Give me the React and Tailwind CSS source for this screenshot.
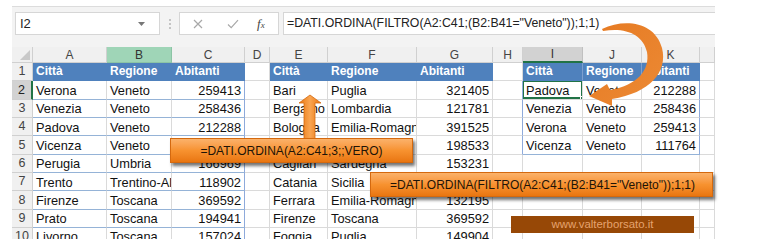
import React from "react";

const COLS = "grid-cols-[21px_74px_65px_73px_25px_58px_89px_76px_30px_60px_59px_58px_15px]";
const LETTERS = ["", "A", "B", "C", "D", "E", "F", "G", "H", "I", "J", "K", ""];

const DATA = [
  ["Città", "Regione", "Abitanti", "Città", "Regione", "Abitanti", "Città", "Regione", "Abitanti"],
  ["Verona", "Veneto", "259413", "Bari", "Puglia", "321405", "Padova", "Veneto", "212288"],
  ["Venezia", "Veneto", "258436", "Bergamo", "Lombardia", "121781", "Venezia", "Veneto", "258436"],
  ["Padova", "Veneto", "212288", "Bologna", "Emilia-Romagna", "391525", "Verona", "Veneto", "259413"],
  ["Vicenza", "Veneto", "111764", "Brescia", "Lombardia", "198533", "Vicenza", "Veneto", "111764"],
  ["Perugia", "Umbria", "166969", "Cagliari", "Sardegna", "153231", "", "", ""],
  ["Trento", "Trentino-Alto Adige", "118902", "Catania", "Sicilia", "314555", "", "", ""],
  ["Firenze", "Toscana", "369592", "Ferrara", "Emilia-Romagna", "132195", "", "", ""],
  ["Prato", "Toscana", "194941", "Firenze", "Toscana", "369592", "", "", ""],
  ["Livorno", "Toscana", "157024", "Foggia", "Puglia", "149904", "", "", ""],
];

function HeaderRow() {
  return (
    <div className={`grid ${COLS} h-[16px]`}>
      {LETTERS.map((l, i) => {
        let cls = "bg-[#f0f0f0] border-r border-b border-[#d0d0d0] text-[#444]";
        if (l === "B") cls = "bg-[#9fd5b7] border-r border-b border-[#8cc4a5] text-[#333]";
        if (l === "I") cls = "bg-[#d2d2d2] border-r border-[#c0c0c0] border-b-2 border-b-[#217346] text-[#333]";
        return (
          <div key={i} className={`relative flex items-center justify-center text-[12px] leading-none ${cls}`}>
            {i === 0 && (
              <svg className="absolute right-[2px] bottom-[2px]" width="10" height="10" viewBox="0 0 10 10">
                <polygon points="10,0 10,10 0,10" fill="#c8c8c8" />
              </svg>
            )}
            {l}
          </div>
        );
      })}
    </div>
  );
}

function DataRow({ r, idx }) {
  const n = idx + 1;
  const header = idx === 0;
  const cells = [];
  cells.push(
    <div
      key="rh"
      className={`flex items-center justify-center text-[12.5px] leading-none border-b border-[#d0d0d0] ${
        n === 2
          ? "bg-[#d2d2d2] text-[#222] border-r-2 border-r-[#217346]"
          : "bg-[#f0f0f0] text-[#444] border-r border-r-[#d0d0d0]"
      }`}
    >
      {n}
    </div>
  );
  const blue = "bg-[#4f81bd] text-white font-bold text-[12px]";
  const mk = (key, text, opts = {}) => {
    const { num, table, tableBlueBottom, rightBlue, sel, hdrSep } = opts;
    let cls = "relative flex items-end pb-[1px] overflow-hidden whitespace-nowrap leading-none border-r border-b ";
    if (header && table) {
      cls += `${blue} border-b-[#4f81bd] ${hdrSep ? "border-r-[#7d9fcf]" : "border-r-[#4f81bd]"} pb-[3px] `;
    } else {
      cls += "bg-white text-[#111] text-[12.8px] ";
      cls += tableBlueBottom ? "border-b-[#95b3d7] " : "border-b-[#dadada] ";
      cls += rightBlue ? "border-r-[#8eaadb] " : "border-r-[#dadada] ";
    }
    cls += num && !header ? "justify-end pr-[3px]" : "pl-[3px]";
    return (
      <div key={key} className={cls}>
        {text}
        {sel && (
          <div className="absolute -left-[1px] -top-[1px] w-[61px] h-[19px] border-2 border-[#217346]">
            <div className="absolute -right-[4px] -bottom-[4px] w-[5px] h-[5px] bg-[#217346] border border-white" />
          </div>
        )}
      </div>
    );
  };
  cells.push(mk("A", r[0], { table: true, tableBlueBottom: true }));
  cells.push(mk("B", r[1], { table: true, tableBlueBottom: true }));
  cells.push(mk("C", r[2], { num: true, table: true, tableBlueBottom: true, rightBlue: true }));
  cells.push(mk("D", ""));
  cells.push(mk("E", r[3], { table: true }));
  cells.push(mk("F", r[4], { table: true }));
  cells.push(mk("G", r[5], { num: true, table: true }));
  const inIK = idx <= 4;
  cells.push(mk("H", "", { rightBlue: inIK && !header }));
  cells.push(mk("I", r[6], { table: inIK, hdrSep: true, tableBlueBottom: idx === 4, sel: idx === 1 }));
  cells.push(mk("J", r[7], { table: inIK, hdrSep: true, tableBlueBottom: idx === 4 }));
  cells.push(mk("K", r[8], { num: true, table: inIK, tableBlueBottom: idx === 4, rightBlue: inIK }));
  cells.push(mk("L", ""));
  return <div className={`grid ${COLS} h-[18.33px]`}>{cells}</div>;
}

function Callout({ className, children }) {
  return (
    <div
      className={`absolute flex items-center justify-center border border-[#d4690f] bg-linear-to-b from-[#fbb26a] via-[#f7922f] to-[#e9760f] text-[#1e1408] text-[12px] whitespace-nowrap shadow-[2px_3px_3px_rgba(0,0,0,0.55)] ${className}`}
    >
      {children}
    </div>
  );
}

export default function App() {
  return (
    <div className="relative w-[760px] h-[249px] bg-white overflow-hidden font-['Liberation_Sans',Arial,sans-serif]">
      <div className="ml-[12px] mt-[6px] w-[703px] h-[233px] overflow-hidden bg-[#f3f3f3] border-t border-[#dcdcdc]">
        <div className="flex items-start h-[40px] pt-[5px]">
          <div className="ml-[3px] w-[145px] h-[23px] bg-white border border-[#d6d6d6] flex items-center pl-[4px] pr-[14px] text-[13px] text-[#222]">
            <span className="flex-1">I2</span>
            <svg width="7" height="4" viewBox="0 0 7 4">
              <polygon points="0,0 7,0 3.5,4" fill="#777" />
            </svg>
          </div>
          <div className="w-[19px] h-[23px] flex flex-col items-center justify-center gap-[2px]">
            <div className="w-[2px] h-[2px] bg-[#c4c4c4]" />
            <div className="w-[2px] h-[2px] bg-[#c4c4c4]" />
            <div className="w-[2px] h-[2px] bg-[#c4c4c4]" />
          </div>
          <div className="w-[100px] h-[23px] bg-white border border-[#d6d6d6] flex items-center">
            <svg className="ml-[13px]" width="10" height="10" viewBox="0 0 10 10">
              <path d="M1 1 L9 9 M9 1 L1 9" stroke="#a8a8a8" strokeWidth="1.2" fill="none" />
            </svg>
            <svg className="ml-[24px]" width="12" height="10" viewBox="0 0 12 10">
              <path d="M1 5.5 L4.2 8.6 L11 1.2" stroke="#a8a8a8" strokeWidth="1.2" fill="none" />
            </svg>
            <span className="ml-[18px] font-['Liberation_Serif',serif] italic text-[13px] text-[#444] leading-none">
              f<span className="text-[9px]">x</span>
            </span>
          </div>
          <div className="ml-[4px] flex-1 h-[23px] bg-white border border-[#d6d6d6] border-r-0 flex items-center pl-[3px] text-[12.3px] text-[#222] whitespace-nowrap">
            =DATI.ORDINA(FILTRO(A2:C41;(B2:B41="Veneto"));1;1)
          </div>
        </div>
        <HeaderRow />
        {DATA.map((r, i) => (
          <DataRow key={i} r={r} idx={i} />
        ))}
      </div>

      <svg className="absolute left-[296px] top-[93px]" width="30" height="48" viewBox="0 0 30 48">
        <defs>
          <linearGradient id="ua" x1="0" x2="1" y1="0" y2="0">
            <stop offset="0" stopColor="#e9760f" />
            <stop offset="0.5" stopColor="#f9a552" />
            <stop offset="1" stopColor="#e9760f" />
          </linearGradient>
        </defs>
        <polygon points="14,2 3,10 8,10 8,47 19,47 19,10 25,10" fill="url(#ua)" stroke="#d4690f" strokeWidth="0.8" />
      </svg>

      <Callout className="left-[170px] top-[138px] w-[243px] h-[25px]">=DATI.ORDINA(A2:C41;3;;VERO)</Callout>
      <Callout className="left-[370px] top-[172px] w-[343px] h-[25px] pl-[2px]">
        =DATI.ORDINA(FILTRO(A2:C41;(B2:B41="Veneto"));1;1)
      </Callout>

      <div className="absolute left-[511px] top-[216px] w-[183px] h-[17px] bg-[#974806] flex items-center justify-center text-[11.4px] text-[#e6a36e]">
        www.valterborsato.it
      </div>

      <svg className="absolute inset-0 pointer-events-none" width="760" height="249" viewBox="0 0 760 249">
        <defs>
          <linearGradient id="ca" x1="0" x2="1" y1="0" y2="1">
            <stop offset="0" stopColor="#e67a22" />
            <stop offset="1" stopColor="#ec8a35" />
          </linearGradient>
        </defs>
        <path
          d="M602 29 C625 18, 655 22, 662 48 C668 72, 650 93, 612 99 L612 106 L589 96 L607 84 L610 90 C638 85, 650 70, 647 52 C643 34, 625 27, 603 31 Z"
          fill="url(#ca)"
        />
      </svg>
    </div>
  );
}
